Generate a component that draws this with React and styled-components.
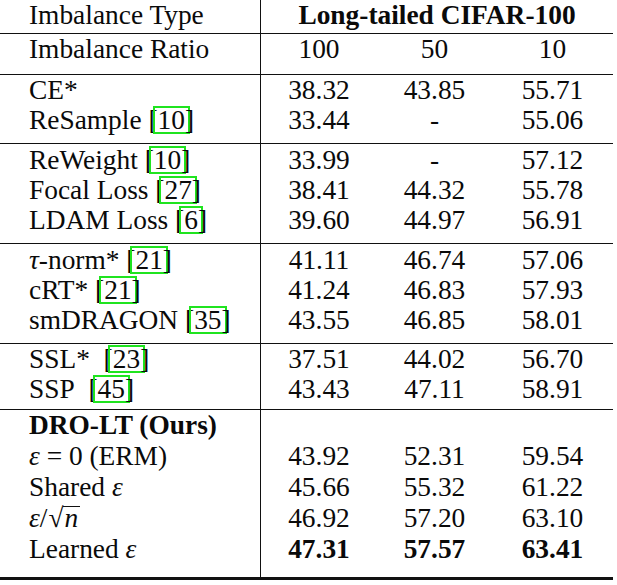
import React from 'react';
import styled, { createGlobalStyle } from 'styled-components';

const GlobalStyle = createGlobalStyle`
  html, body {
    margin: 0;
    padding: 0;
    background: #fff;
  }
  body {
    font-family: "Liberation Serif", "Times New Roman", serif;
    color: #0a0a0a;
  }
`;

const Table = styled.div`
  width: 613px;
  font-size: 27.4px;
`;

const Section = styled.div`
  display: grid;
  grid-template-columns: 261px 116px 115px 121px;
  padding: ${props => props.$pt || 0}px 0 ${props => props.$pb || 0}px;
  line-height: ${props => props.$lh || 30}px;
  border-bottom: ${props => props.$rule || 1}px solid #111;
  background: linear-gradient(#111, #111) 260px 0 / 1px 100% no-repeat;
`;

const Label = styled.div`
  padding-left: 29px;
  white-space: nowrap;
  font-weight: ${props => (props.$bold ? 700 : 400)};
`;

const Cell = styled.div`
  text-align: center;
  white-space: nowrap;
  font-weight: ${props => (props.$bold ? 700 : 400)};
`;

const SpanCell = styled.div`
  grid-column: 2 / 5;
  text-align: center;
  font-weight: 700;
`;

const Cite = styled.span`
  display: inline-block;
  margin: 0 -5px;
  padding: 1px 3px 0;
  line-height: 23px;
  border: 2px solid #1fe41f;
`;

const Var = styled.i`
  font-style: italic;
`;

const Radical = styled.span`
  display: inline-block;
  margin-left: 1px;
`;

const Radicand = styled.i`
  display: inline-block;
  font-style: italic;
  line-height: 22px;
  padding: 0 2px 0 1px;
  border-top: 1.5px solid #111;
`;

function Method({ name, cite, wide }) {
  return (
    <>
      {name}
      {wide ? '\u00a0\u00a0' : ' '}[<Cite>{cite}</Cite>]
    </>
  );
}

const groups = [
  {
    pb: 8,
    rows: [
      { label: 'CE*', values: ['38.32', '43.85', '55.71'] },
      { label: <Method name="ReSample" cite="10" />, values: ['33.44', '-', '55.06'] },
    ],
  },
  {
    pt: 1,
    pb: 8,
    rows: [
      { label: <Method name="ReWeight" cite="10" />, values: ['33.99', '-', '57.12'] },
      { label: <Method name="Focal Loss" cite="27" />, values: ['38.41', '44.32', '55.78'] },
      { label: <Method name="LDAM Loss" cite="6" />, values: ['39.60', '44.97', '56.91'] },
    ],
  },
  {
    pt: 1,
    pb: 8,
    rows: [
      {
        label: <Method name={<><Var>τ</Var>-norm*</>} cite="21" />,
        values: ['41.11', '46.74', '57.06'],
      },
      { label: <Method name="cRT*" cite="21" />, values: ['41.24', '46.83', '57.93'] },
      { label: <Method name="smDRAGON" cite="35" />, values: ['43.55', '46.85', '58.01'] },
    ],
  },
  {
    pb: 5,
    rows: [
      { label: <Method name="SSL*" cite="23" wide />, values: ['37.51', '44.02', '56.70'] },
      { label: <Method name="SSP" cite="45" wide />, values: ['43.43', '47.11', '58.91'] },
    ],
  },
  {
    lh: 31,
    pb: 12,
    rule: 3,
    rows: [
      { label: 'DRO-LT (Ours)', bold: true, values: ['', '', ''] },
      { label: <><Var>ε</Var> = 0 (ERM)</>, values: ['43.92', '52.31', '59.54'] },
      { label: <>Shared <Var>ε</Var></>, values: ['45.66', '55.32', '61.22'] },
      {
        label: <><Var>ε</Var>/<Radical>√</Radical><Radicand>n</Radicand></>,
        values: ['46.92', '57.20', '63.10'],
      },
      { label: <>Learned <Var>ε</Var></>, boldValues: true, values: ['47.31', '57.57', '63.41'] },
    ],
  },
];

export default function App() {
  return (
    <>
      <GlobalStyle />
      <Table>
        <Section $pb={3}>
          <Label>Imbalance Type</Label>
          <SpanCell>Long-tailed CIFAR-100</SpanCell>
        </Section>
        <Section $pb={10}>
          <Label>Imbalance Ratio</Label>
          <Cell>100</Cell>
          <Cell>50</Cell>
          <Cell>10</Cell>
        </Section>
        {groups.map((group, gi) => (
          <Section key={gi} $pt={group.pt} $pb={group.pb} $lh={group.lh} $rule={group.rule}>
            {group.rows.map((row, ri) => (
              <React.Fragment key={ri}>
                <Label $bold={row.bold}>{row.label}</Label>
                {row.values.map((v, vi) => (
                  <Cell key={vi} $bold={row.boldValues}>{v}</Cell>
                ))}
              </React.Fragment>
            ))}
          </Section>
        ))}
      </Table>
    </>
  );
}
